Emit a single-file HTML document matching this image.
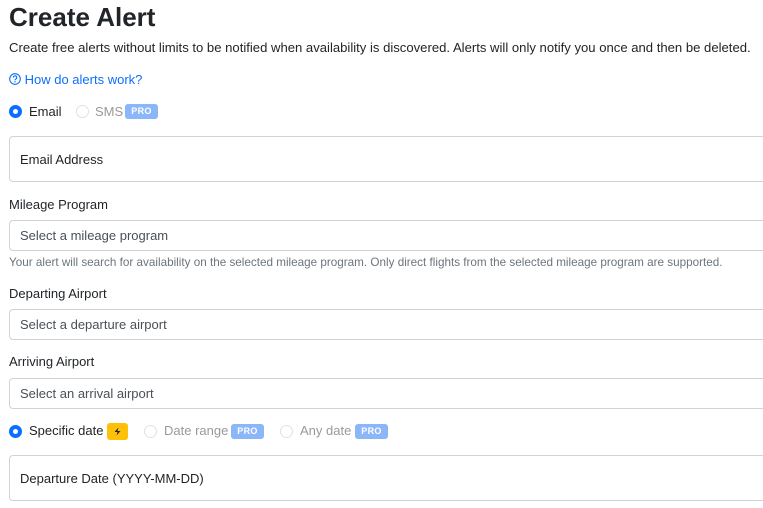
<!DOCTYPE html>
<html><head><style>
body{margin:0;width:763px;height:508px;overflow:hidden;background:#fff;font-family:"Liberation Sans",Arial,sans-serif;color:#212529;position:relative}
.a{position:absolute;white-space:nowrap}
.box{position:absolute;left:9px;width:780px;border:1px solid #ced4da;border-radius:4px;box-sizing:border-box;font-size:13px;color:#212529;padding-left:10px;display:flex;align-items:center}
.sel{color:#495057}
.lbl{position:absolute;left:9px;font-size:13px}
.r{position:absolute;width:13px;height:13px;border-radius:50%;box-sizing:border-box}
.on{background:#0d6efd;border:4px solid #0d6efd}
.on::after{content:"";position:absolute;left:0;top:0;width:5px;height:5px;border-radius:50%;background:#fff}
.off{border:1px solid #dee2e6;background:#fff}
.pro{position:absolute;background:#8bb6f8;color:#fff;font-size:9px;font-weight:bold;border-radius:3px;width:33px;text-align:center;height:15px;line-height:15px;letter-spacing:.3px}
.g{color:#999}
</style></head><body>
<div class="a" style="left:9px;top:2px;font-size:26px;font-weight:bold">Create Alert</div>
<div class="a" style="left:9px;top:40px;font-size:13.1px">Create free alerts without limits to be notified when availability is discovered. Alerts will only notify you once and then be deleted.</div>
<div class="a" style="left:9px;top:72px;font-size:13px;color:#0d6efd"><svg width="12" height="12" viewBox="0 0 12 12" style="vertical-align:-1px"><circle cx="6" cy="6" r="5.3" fill="none" stroke="#0d6efd" stroke-width="1.1"/><path d="M4.3 4.6a1.7 1.7 0 1 1 2.4 1.5c-.5.3-.7.5-.7 1.1" fill="none" stroke="#0d6efd" stroke-width="1.1"/><circle cx="6" cy="8.8" r=".7" fill="#0d6efd"/></svg> How do alerts work?</div>
<div class="r on" style="left:9px;top:105px"></div>
<div class="a" style="left:29px;top:104px;font-size:13px">Email</div>
<div class="r off" style="left:76px;top:105px"></div>
<div class="a g" style="left:95px;top:104px;font-size:13px">SMS</div>
<div class="pro" style="left:125px;top:104px">PRO</div>
<div class="box" style="top:136px;height:46px">Email Address</div>
<div class="lbl" style="top:197px">Mileage Program</div>
<div class="box sel" style="top:220px;height:31px">Select a mileage program</div>
<div class="a" style="left:9px;top:256px;font-size:11.7px;color:#6c757d">Your alert will search for availability on the selected mileage program. Only direct flights from the selected mileage program are supported.</div>
<div class="lbl" style="top:286px">Departing Airport</div>
<div class="box sel" style="top:309px;height:31px">Select a departure airport</div>
<div class="lbl" style="top:354px">Arriving Airport</div>
<div class="box sel" style="top:378px;height:31px">Select an arrival airport</div>
<div class="r on" style="left:9px;top:425px"></div>
<div class="a" style="left:29px;top:423px;font-size:13px">Specific date</div>
<div class="a" style="left:107px;top:423px;width:21px;height:17px;background:#ffc107;border-radius:3px"><svg width="21" height="17" viewBox="0 0 21 17"><path d="M11.5 4.5L7.5 9h3l-1 3.5 4-4.5h-3z" fill="#212529"/></svg></div>
<div class="r off" style="left:144px;top:425px"></div>
<div class="a g" style="left:164px;top:423px;font-size:13px">Date range</div>
<div class="pro" style="left:231px;top:424px">PRO</div>
<div class="r off" style="left:280px;top:425px"></div>
<div class="a g" style="left:300px;top:423px;font-size:13px">Any date</div>
<div class="pro" style="left:355px;top:424px">PRO</div>
<div class="box" style="top:455px;height:46px">Departure Date (YYYY-MM-DD)</div>
</body></html>
